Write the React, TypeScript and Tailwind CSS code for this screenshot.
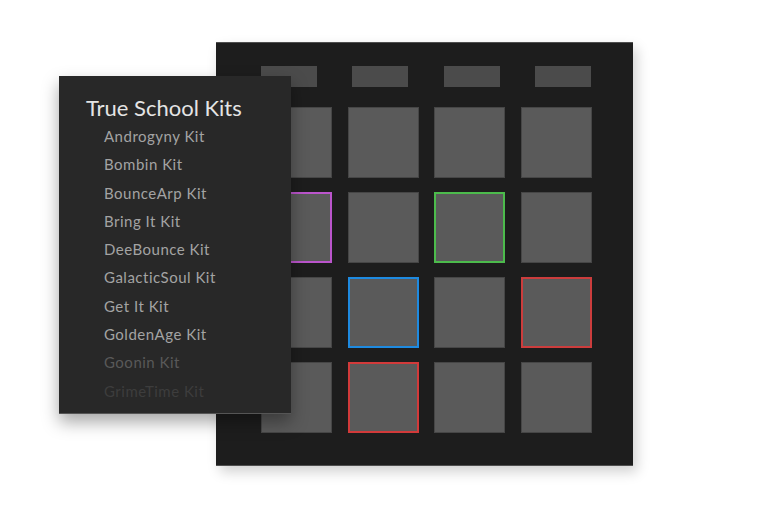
import React from 'react';

type Pad = { color?: string };

const KITS: { name: string; tone: string }[] = [
  { name: 'Androgyny Kit', tone: 'text-[#a3a3a3]' },
  { name: 'Bombin Kit', tone: 'text-[#a3a3a3]' },
  { name: 'BounceArp Kit', tone: 'text-[#a3a3a3]' },
  { name: 'Bring It Kit', tone: 'text-[#a3a3a3]' },
  { name: 'DeeBounce Kit', tone: 'text-[#a3a3a3]' },
  { name: 'GalacticSoul Kit', tone: 'text-[#a3a3a3]' },
  { name: 'Get It Kit', tone: 'text-[#a3a3a3]' },
  { name: 'GoldenAge Kit', tone: 'text-[#a3a3a3]' },
  { name: 'Goonin Kit', tone: 'text-[#595959]' },
  { name: 'GrimeTime Kit', tone: 'text-[#3d3d3d]' },
];

// border classes per pad, row by row
const PADS: Pad[] = [
  {}, {}, {}, {},
  { color: 'border-2 border-[#bb55cc]' }, {}, { color: 'border-2 border-[#4cbb4c]' }, {},
  {}, { color: 'border-2 border-[#1e8ae0]' }, {}, { color: 'border-2 border-[#cc3d3d]' },
  {}, { color: 'border-2 border-[#d23a3a]' }, {}, {},
];

export default function App() {
  return (
    <div className="w-[768px] h-[509px] bg-white overflow-hidden relative font-['Lato','Liberation_Sans',sans-serif]">
      {/* Pad controller */}
      <div className="ml-[216px] mt-[42px] w-[417px] h-[424px] bg-[#1d1d1d] border-y border-[#4f4f4f] shadow-[4px_6px_12px_rgba(0,0,0,0.18)] pl-[45px] pt-[23px]">
        <div className="w-[330px] flex justify-between">
          {[0, 1, 2, 3].map(i => (
            <div key={i} className="w-[56px] h-[21px] bg-[#4b4b4b]" />
          ))}
        </div>
        <div className="mt-[20px] grid grid-cols-[repeat(4,71px)] gap-x-[15.5px] gap-y-[14px]">
          {PADS.map((p, i) => (
            <div
              key={i}
              className={`w-[71px] h-[71px] bg-[#5a5a5a] ${p.color ?? 'border border-[#464646]'}`}
            />
          ))}
        </div>
      </div>

      {/* Kit menu */}
      <div className="absolute left-[59px] top-[76px] w-[232px] h-[338px] bg-[#282828] border-b border-[#555] shadow-[0_8px_16px_rgba(0,0,0,0.35)] pt-[17px]">
        <div className="pl-[27px] text-[22px] leading-[30px] text-[#e4e4e4]">
          True School Kits
        </div>
        <ul className="pl-[45px] -mt-[1px]">
          {KITS.map(k => (
            <li key={k.name} className={`text-[15px] leading-[28.3px] tracking-[0.5px] ${k.tone}`}>
              {k.name}
            </li>
          ))}
        </ul>
      </div>
    </div>
  );
}
